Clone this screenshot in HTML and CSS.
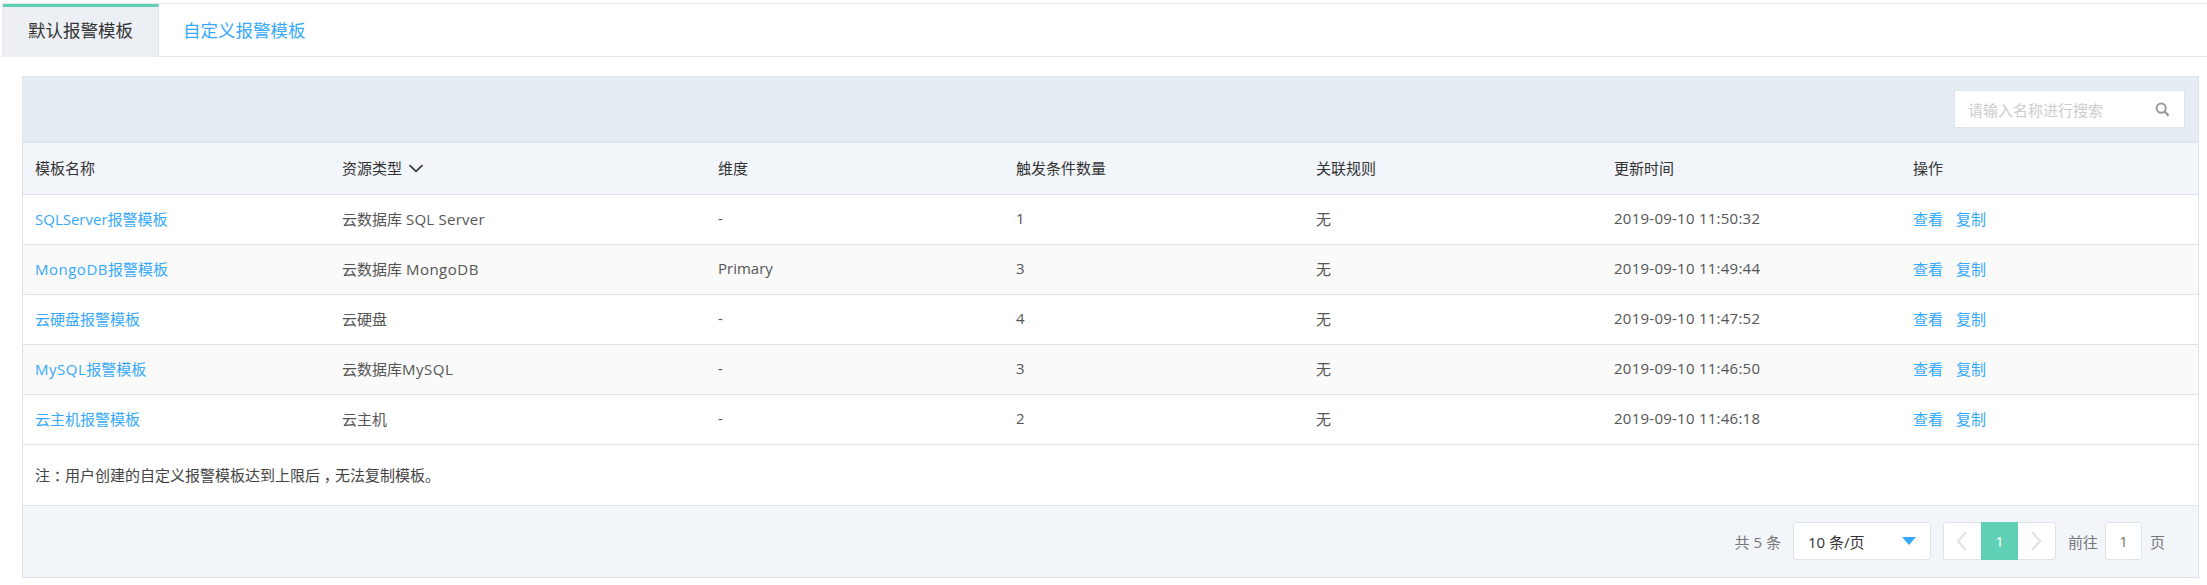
FILE: index.html
```html
<!doctype html>
<html>
<head>
    <meta charset="utf-8">
    <title>默认报警模板</title>
    <link rel="stylesheet" href="styles.css">
</head>
<body>
    <div class="page">
        <ul class="tabs">
            <li class="tab active">默认报警模板</li>
            <li class="tab">自定义报警模板</li>
        </ul>
        <div class="panel">
            <div class="toolbar">
                <div class="search">
                    <span class="placeholder">请输入名称进行搜索</span>
                    <svg class="search-icon" width="15" height="15" viewBox="0 0 15 15"><circle cx="6.2" cy="6.2" r="4.6" fill="none" stroke="#999" stroke-width="2"/><path d="M9.8 9.8L13.6 13.6" stroke="#999" stroke-width="2.2" fill="none"/></svg>
                </div>
            </div>
            <table class="grid">
                <colgroup>
                    <col class="col-name">
                    <col class="col-type">
                    <col class="col-dim">
                    <col class="col-count">
                    <col class="col-rule">
                    <col class="col-time">
                    <col>
                </colgroup>
                <thead>
                    <tr>
                        <th>模板名称</th>
                        <th>资源类型 <svg class="sort-icon" width="16" height="9" viewBox="0 0 16 9"><path d="M1.5 1.2L8 7.4L14.5 1.2" fill="none" stroke="#333" stroke-width="1.6"/></svg></th>
                        <th>维度</th>
                        <th>触发条件数量</th>
                        <th>关联规则</th>
                        <th>更新时间</th>
                        <th>操作</th>
                    </tr>
                </thead>
                <tbody>
                    <tr>
                        <td><a href="#">SQLServer报警模板</a></td>
                        <td>云数据库 <span class="latin">SQL Server</span></td>
                        <td>-</td>
                        <td>1</td>
                        <td>无</td>
                        <td class="latin">2019-09-10 11:50:32</td>
                        <td class="actions"><a href="#">查看</a><a href="#">复制</a></td>
                    </tr>
                    <tr>
                        <td><a href="#"><span class="latin-wide">MongoDB</span>报警模板</a></td>
                        <td>云数据库 <span class="latin-wide">MongoDB</span></td>
                        <td>Primary</td>
                        <td>3</td>
                        <td>无</td>
                        <td class="latin">2019-09-10 11:49:44</td>
                        <td class="actions"><a href="#">查看</a><a href="#">复制</a></td>
                    </tr>
                    <tr>
                        <td><a href="#">云硬盘报警模板</a></td>
                        <td>云硬盘</td>
                        <td>-</td>
                        <td>4</td>
                        <td>无</td>
                        <td class="latin">2019-09-10 11:47:52</td>
                        <td class="actions"><a href="#">查看</a><a href="#">复制</a></td>
                    </tr>
                    <tr>
                        <td><a href="#"><span class="latin-wide">MySQL</span>报警模板</a></td>
                        <td>云数据库<span class="latin-wide">MySQL</span></td>
                        <td>-</td>
                        <td>3</td>
                        <td>无</td>
                        <td class="latin">2019-09-10 11:46:50</td>
                        <td class="actions"><a href="#">查看</a><a href="#">复制</a></td>
                    </tr>
                    <tr>
                        <td><a href="#">云主机报警模板</a></td>
                        <td>云主机</td>
                        <td>-</td>
                        <td>2</td>
                        <td>无</td>
                        <td class="latin">2019-09-10 11:46:18</td>
                        <td class="actions"><a href="#">查看</a><a href="#">复制</a></td>
                    </tr>
                </tbody>
            </table>
            <p class="note"><span>注<span class="punct">：</span>用户创建的自定义报警模板达到上限后<span class="punct">，</span>无法复制模板。</span></p>
            <div class="pager">
                <span class="total">共 5 条</span>
                <div class="size-select">
                    <span>10 条/页</span>
                    <i class="caret"></i>
                </div>
                <div class="pages">
                    <span class="page-btn"><svg width="12" height="22" viewBox="0 0 12 22"><path d="M10 2L2 11L10 20" fill="none" stroke="#e4e4e4" stroke-width="2.4"/></svg></span>
                    <span class="page-btn current">1</span>
                    <span class="page-btn"><svg width="12" height="22" viewBox="0 0 12 22"><path d="M2 2L10 11L2 20" fill="none" stroke="#e4e4e4" stroke-width="2.4"/></svg></span>
                </div>
                <span class="goto">前往</span>
                <span class="goto-input">1</span>
                <span class="goto-unit">页</span>
            </div>
        </div>
    </div>
</body>
</html>
```

FILE: styles.css
```css
html {
    background: #fff;
}

body {
    margin: 0;
    font-family: "Open Sans", "Noto Sans CJK SC", sans-serif;
    font-size: 15px;
    color: #555;
}

a {
    color: #36a9fb;
    text-decoration: none;
}

.page {
    height: 585px;
    padding: 3px 0 0 2px;
    box-sizing: border-box;
    overflow: hidden;
}

.tabs {
    display: flex;
    margin: 0;
    padding: 0;
    height: 54px;
    list-style: none;
    border-top: 1px solid #e4e8ee;
    border-left: 1px solid #e4e8ee;
    border-bottom: 1px solid #e0e5ec;
    box-sizing: border-box;
}

.tab {
    padding: 3px 24px 0;
    line-height: 46px;
    font-size: 17.5px;
    color: #36a9fb;
}

.tab.active {
    width: 156px;
    height: 53px;
    padding: 0;
    text-align: center;
    box-sizing: border-box;
    background: #ecf0f5;
    border-top: 3px solid #5fd0b3;
    border-right: 1px solid #e0e5ec;
    color: #333;
}

.panel {
    margin: 19px 8px 0 20px;
    height: 502px;
    box-sizing: border-box;
    border: 1px solid #dde3ea;
}

.toolbar {
    display: flex;
    justify-content: flex-end;
    align-items: center;
    height: 66px;
    padding-right: 13px;
    box-sizing: border-box;
    background: #e6ecf3;
    border-bottom: 2px solid #dde3ea;
}

.search {
    display: flex;
    align-items: center;
    justify-content: space-between;
    width: 231px;
    height: 38px;
    padding: 0 14px 0 13px;
    box-sizing: border-box;
    background: #fff;
    border: 1px solid #dde3ea;
}

.placeholder {
    color: #ccc;
}

.grid {
    width: 100%;
    border-collapse: collapse;
    table-layout: fixed;
}

.col-name { width: 306px; }
.col-type { width: 376px; }
.col-dim { width: 298px; }
.col-count { width: 300px; }
.col-rule { width: 298px; }
.col-time { width: 299px; }

.grid th,
.grid td {
    height: 50px;
    padding: 0 0 2px 13px;
    box-sizing: border-box;
    text-align: left;
    font-weight: normal;
    border-bottom: 1px solid #dde3ea;
}

.grid th:first-child,
.grid td:first-child {
    padding-left: 12px;
}

.grid th {
    background: #f2f5fa;
    color: #333;
    height: 51px;
    padding-bottom: 1px;
}

.sort-icon {
    margin-left: 2px;
    vertical-align: 1px;
}

.grid tbody tr:nth-child(even) td {
    background: #fafafa;
}

.latin {
    letter-spacing: 0.25px;
}

.latin-wide {
    letter-spacing: 0.5px;
}

.actions a {
    margin-right: 13px;
}

.note {
    display: flex;
    align-items: center;
    margin: 0;
    height: 60px;
    padding-left: 12px;
    color: #444;
    border-bottom: 1px solid #dde3ea;
}

.punct {
    padding: 0 3.75px;
    font-feature-settings: "halt";
}

.pager {
    display: flex;
    align-items: center;
    justify-content: flex-end;
    height: 71px;
    padding-right: 33px;
    box-sizing: border-box;
    background: #f2f5fa;
    color: #777;
}

.total {
    margin-right: 12px;
}

.size-select {
    display: flex;
    align-items: center;
    justify-content: space-between;
    width: 138px;
    height: 38px;
    padding: 0 14px;
    box-sizing: border-box;
    background: #fff;
    border: 1px solid #dde3ea;
    border-radius: 3px;
    color: #333;
}

.caret {
    width: 0;
    height: 0;
    border-left: 7px solid transparent;
    border-right: 7px solid transparent;
    border-top: 8px solid #36a9fb;
}

.pages {
    display: flex;
    height: 38px;
    margin-left: 12px;
    box-sizing: border-box;
    background: #fff;
    border: 1px solid #dde3ea;
    border-radius: 3px;
}

.page-btn {
    display: flex;
    align-items: center;
    justify-content: center;
    width: 37px;
}

.page-btn.current {
    margin: -1px 0;
    background: #5fd0b3;
    color: #fff;
}

.goto {
    margin-left: 12px;
}

.goto-input {
    width: 37px;
    height: 38px;
    margin-left: 7px;
    line-height: 36px;
    text-align: center;
    box-sizing: border-box;
    background: #fff;
    border: 1px solid #dde3ea;
    border-radius: 3px;
}

.goto-unit {
    margin-left: 8px;
}
```
